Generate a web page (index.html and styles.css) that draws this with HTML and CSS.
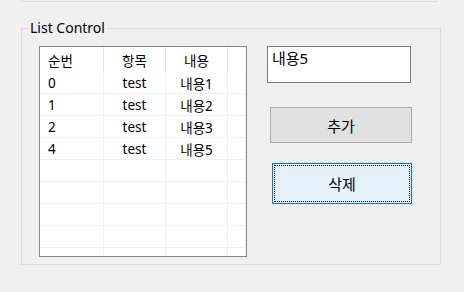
FILE: index.html
```html
<!DOCTYPE html>
<html lang="ko">
<head>
    <meta charset="UTF-8">
    <title>List Control</title>
    <link rel="stylesheet" href="styles.css">
</head>
<body>
    <div class="topbox"></div>
    <fieldset class="group">
        <legend>List Control</legend>
        <div class="list">
            <table>
                <thead>
                    <tr><th class="num">순번</th><th>항목</th><th>내용</th><th class="rest"></th></tr>
                </thead>
                <tbody>
                    <tr><td class="num">0</td><td>test</td><td>내용1</td><td></td></tr>
                    <tr><td class="num">1</td><td>test</td><td>내용2</td><td></td></tr>
                    <tr><td class="num">2</td><td>test</td><td>내용3</td><td></td></tr>
                    <tr><td class="num">4</td><td>test</td><td>내용5</td><td></td></tr>
                    <tr><td></td><td></td><td></td><td></td></tr>
                    <tr><td></td><td></td><td></td><td></td></tr>
                    <tr><td></td><td></td><td></td><td></td></tr>
                    <tr><td></td><td></td><td></td><td></td></tr>
                    <tr><td></td><td></td><td></td><td></td></tr>
                </tbody>
            </table>
        </div>
        <div class="side">
            <div class="edit">내용5</div>
            <button class="btn">추가</button>
            <button class="btn btn-focus">삭제</button>
        </div>
    </fieldset>
</body>
</html>
```

FILE: styles.css
```css
body {
    margin: 0;
    background: #f0f0f0;
    font-family: "Noto Sans", "Noto Sans CJK KR", sans-serif;
    color: #000;
}

.topbox {
    width: 416px;
    height: 2px;
    margin-left: 21px;
    box-sizing: border-box;
    border: 1px solid #dcdcdc;
    border-top: none;
}

.group {
    display: flex;
    align-items: flex-start;
    width: 420px;
    margin: 19px 0 0 21px;
    box-sizing: border-box;
    border: 1px solid #dcdcdc;
    padding: 11px 0 7px 0;
    min-width: 0;
}

.group legend {
    margin-left: 6px;
    padding: 0 2px;
    font-size: 14px;
    line-height: 14px;
}

.list {
    width: 208px;
    height: 211px;
    margin-left: 17px;
    box-sizing: border-box;
    border: 1px solid #828790;
    background: #fff;
    overflow: hidden;
}

.list table {
    width: 206px;
    table-layout: fixed;
    border-collapse: separate;
    border-spacing: 0;
    font-size: 13.5px;
}

.list th {
    height: 25px;
    padding: 0;
    font-weight: normal;
    border-right: 1px solid #e5e5e5;
}

.list td {
    height: 21px;
    padding: 0;
    text-align: center;
    border-right: 1px solid #f0f0f0;
    border-bottom: 1px solid #f0f0f0;
}

.list th:nth-child(1) { width: 55px; }
.list th:nth-child(2) { width: 61px; }
.list th:nth-child(3) { width: 61px; }

.list .num {
    text-align: left;
    padding-left: 8px;
}

.list .rest {
    border-right: none;
}

.side {
    display: flex;
    flex-direction: column;
    align-items: flex-start;
    margin-left: 20px;
}

.edit {
    width: 144px;
    height: 37px;
    box-sizing: border-box;
    border: 1px solid #7a7a7a;
    background: #fff;
    padding: 1px 4px;
    font-size: 15px;
    line-height: 20px;
}

.btn {
    margin: 24px 0 0 3px;
    width: 142px;
    height: 36px;
    box-sizing: border-box;
    border: 1px solid #adadad;
    background: #e1e1e1;
    font-family: inherit;
    font-size: 15px;
    color: #000;
    padding: 0;
}

.btn-focus {
    margin: 20px 0 0 5px;
    width: 140px;
    height: 41px;
    border-color: #0078d7;
    background: #e5f1fb;
    outline: 1px dotted #000;
    outline-offset: -3px;
}
```
